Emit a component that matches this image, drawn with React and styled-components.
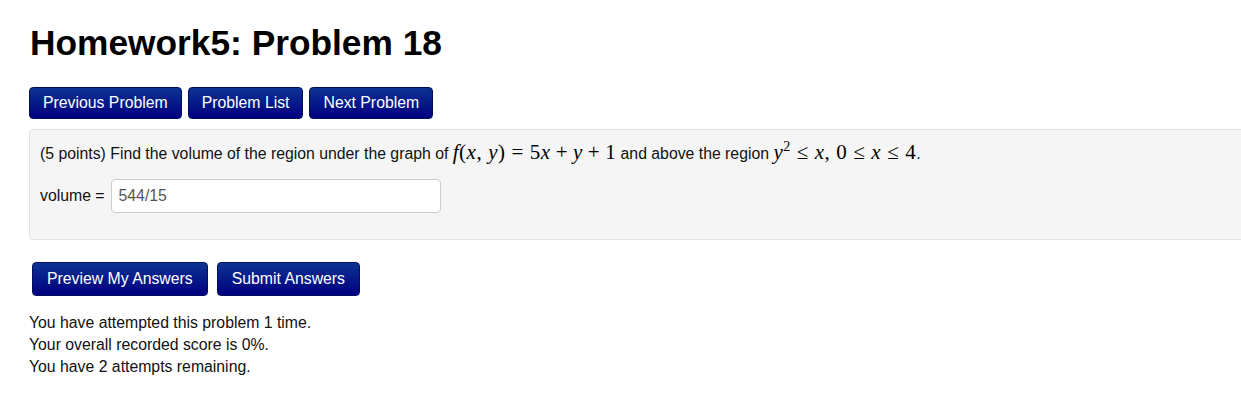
import React from "react";
import styled, { createGlobalStyle } from "styled-components";

const Global = createGlobalStyle`
  html, body { margin: 0; padding: 0; overflow: hidden; background: #fff; }
  body { font-family: "Liberation Sans", Arial, sans-serif; color: #111; }
`;

const Page = styled.div`
  padding: 23px 0 0 29px;
  font-size: 15.8px;
  line-height: 22px;
`;

const Title = styled.h1`
  margin: 0 0 24px 1px;
  font-size: 35.3px;
  line-height: 40px;
  font-weight: bold;
  color: #000;
`;

const NavBar = styled.div`
  display: flex;
  gap: 6px;
  margin-bottom: 10px;
`;

const Button = styled.button`
  font-family: "Liberation Sans", Arial, sans-serif;
  font-size: 15.8px;
  color: #fff;
  height: ${(p) => p.$h || 32}px;
  padding: 0 ${(p) => p.$px || 13}px;
  border: 1px solid #00105e;
  border-radius: 4px;
  background: linear-gradient(to bottom, #0c3392, #000080);
  cursor: pointer;
`;

const Panel = styled.div`
  width: 1300px;
  box-sizing: border-box;
  background: #f5f5f5;
  border: 1px solid #e3e3e3;
  border-radius: 4px;
  padding: 11px 10px 26px 10px;
`;

const Statement = styled.p`
  margin: 0 0 14px 0;
  line-height: 22px;
`;

const Math = styled.span`
  font-family: "Liberation Serif", "Times New Roman", serif;
  font-size: 21px;
  letter-spacing: 0.5px;
  color: #000;
  white-space: nowrap;
`;

const V = styled.i`
  font-style: italic;
`;

const Op = styled.span`
  margin: 0 ${(p) => p.$s || 0}px;
`;

const Sup = styled.sup`
  font-size: 14px;
  line-height: 0;
  vertical-align: 8px;
`;

const AnswerRow = styled.div`
  display: flex;
  align-items: center;
  gap: 6px;
`;

const Input = styled.input`
  box-sizing: border-box;
  width: 330px;
  height: 34px;
  padding: 0 7px;
  font-family: "Liberation Sans", Arial, sans-serif;
  font-size: 15.8px;
  color: #555;
  background: #fff;
  border: 1px solid #ccc;
  border-radius: 4px;
  outline: none;
`;

const SubmitBar = styled.div`
  display: flex;
  gap: 9px;
  margin: 22px 0 16px 3px;
`;

const Info = styled.div`
  line-height: 22px;
  color: #111;
`;

export default function App() {
  return (
    <>
      <Global />
      <Page>
        <Title>Homework5: Problem 18</Title>
        <NavBar>
          <Button>Previous Problem</Button>
          <Button>Problem List</Button>
          <Button>Next Problem</Button>
        </NavBar>
        <Panel>
          <Statement>
            (5 points) Find the volume of the region under the graph of{" "}
            <Math>
              <V>f</V>(<V>x</V>,<Op $s={3} /><V>y</V>)<Op $s={6}>=</Op>5<V>x</V>
              <Op $s={5}>+</Op><V>y</V><Op $s={5}>+</Op>1
            </Math>{" "}
            and above the region{" "}
            <Math>
              <V>y</V><Sup>2</Sup><Op $s={6}>≤</Op><V>x</V>,<Op $s={3} />0
              <Op $s={6}>≤</Op><V>x</V><Op $s={6}>≤</Op>4
            </Math>
            .
          </Statement>
          <AnswerRow>
            <span>volume =</span>
            <Input defaultValue="544/15" />
          </AnswerRow>
        </Panel>
        <SubmitBar>
          <Button $h={34} $px={14}>Preview My Answers</Button>
          <Button $h={34} $px={14}>Submit Answers</Button>
        </SubmitBar>
        <Info>
          You have attempted this problem 1 time.
          <br />
          Your overall recorded score is 0%.
          <br />
          You have 2 attempts remaining.
        </Info>
      </Page>
    </>
  );
}
